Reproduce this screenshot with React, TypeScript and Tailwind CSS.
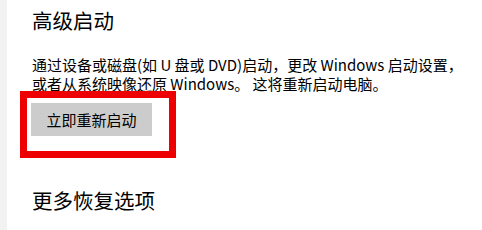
export default function App() {
  return (
    <div className="w-[482px] h-[230px] flex bg-white overflow-hidden text-black font-['Noto_Sans_CJK_SC',sans-serif]">
      {/* left nav edge */}
      <div className="w-[7px] shrink-0 bg-[#f2f2f2]" />

      <div className="pl-[25px] flex flex-col items-start">
        <h2 className="mt-[6px] text-[20.5px] leading-[28px] font-normal">高级启动</h2>

        <div className="mt-[21px] text-[15px] leading-[19px] whitespace-nowrap flex flex-col">
          <span>通过设备或磁盘(如 U 盘或 DVD)启动，更改 Windows 启动设置，</span>
          <span>或者从系统映像还原 Windows。 这将重新启动电脑。</span>
        </div>

        {/* highlighted button */}
        <div className="-mt-[2px] -ml-[12px] w-[156px] h-[67px] border-[7px] border-[#ee0000] pl-[4px] pt-[5px]">
          <button className="w-[121px] h-[33px] bg-[#cccccc] text-[15px] leading-[33px] text-black">
            立即重新启动
          </button>
        </div>

        <h2 className="mt-[28px] text-[20.5px] leading-[28px] font-normal">更多恢复选项</h2>
      </div>
    </div>
  );
}
